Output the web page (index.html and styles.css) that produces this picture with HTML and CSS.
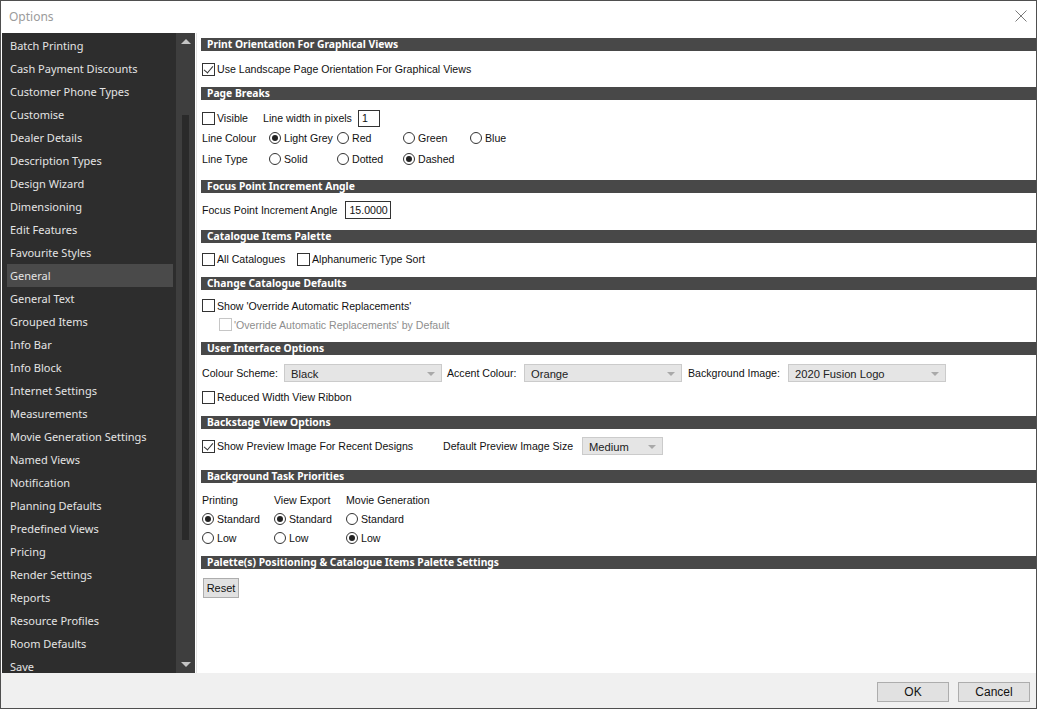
FILE: index.html
```html
<!DOCTYPE html>
<html lang="en">
<head>
    <meta charset="UTF-8">
    <title>Options</title>
    <link rel="stylesheet" href="styles.css">
</head>
<body>
    <div class="window">
        <div class="titlebar">
            <span class="title">Options</span>
            <svg class="close" width="12" height="12" viewBox="0 0 12 12">
                <path d="M0.5 0.5 L11.5 11.5 M11.5 0.5 L0.5 11.5" stroke="#7a7a7a" stroke-width="1" fill="none"/>
            </svg>
        </div>

        <div class="main">
            <div class="sidebar">
                <ul class="nav">
                    <li>Batch Printing</li>
                    <li>Cash Payment Discounts</li>
                    <li>Customer Phone Types</li>
                    <li>Customise</li>
                    <li>Dealer Details</li>
                    <li>Description Types</li>
                    <li>Design Wizard</li>
                    <li>Dimensioning</li>
                    <li>Edit Features</li>
                    <li>Favourite Styles</li>
                    <li class="active">General</li>
                    <li>General Text</li>
                    <li>Grouped Items</li>
                    <li>Info Bar</li>
                    <li>Info Block</li>
                    <li>Internet Settings</li>
                    <li>Measurements</li>
                    <li>Movie Generation Settings</li>
                    <li>Named Views</li>
                    <li>Notification</li>
                    <li>Planning Defaults</li>
                    <li>Predefined Views</li>
                    <li>Pricing</li>
                    <li>Render Settings</li>
                    <li>Reports</li>
                    <li>Resource Profiles</li>
                    <li>Room Defaults</li>
                    <li>Save</li>
                </ul>
                <div class="scrollbar">
                    <div class="arrow up"></div>
                    <div class="track"><div class="thumb"></div></div>
                    <div class="arrow down"></div>
                </div>
            </div>

            <div class="content">
                <div class="section s1">
                    <div class="header">Print Orientation For Graphical Views</div>
                    <div class="body">
                        <div class="row">
                            <label class="opt"><span class="check on"></span>Use Landscape Page Orientation For Graphical Views</label>
                        </div>
                    </div>
                </div>

                <div class="section s2">
                    <div class="header">Page Breaks</div>
                    <div class="body">
                        <div class="row">
                            <label class="opt w61"><span class="check"></span>Visible</label>
                            <span>Line width in pixels</span>
                            <span class="textbox small">1</span>
                        </div>
                        <div class="row">
                            <span class="w67">Line Colour</span>
                            <label class="opt w68"><span class="radio on"></span>Light Grey</label>
                            <label class="opt w66"><span class="radio"></span>Red</label>
                            <label class="opt w67"><span class="radio"></span>Green</label>
                            <label class="opt"><span class="radio"></span>Blue</label>
                        </div>
                        <div class="row">
                            <span class="w67">Line Type</span>
                            <label class="opt w68"><span class="radio"></span>Solid</label>
                            <label class="opt w66"><span class="radio"></span>Dotted</label>
                            <label class="opt"><span class="radio on"></span>Dashed</label>
                        </div>
                    </div>
                </div>

                <div class="section s3">
                    <div class="header">Focus Point Increment Angle</div>
                    <div class="body">
                        <div class="row">
                            <span>Focus Point Increment Angle</span>
                            <span class="textbox angle">15.0000</span>
                        </div>
                    </div>
                </div>

                <div class="section s4">
                    <div class="header">Catalogue Items Palette</div>
                    <div class="body">
                        <div class="row">
                            <label class="opt w95"><span class="check"></span>All Catalogues</label>
                            <label class="opt"><span class="check"></span>Alphanumeric Type Sort</label>
                        </div>
                    </div>
                </div>

                <div class="section s5">
                    <div class="header">Change Catalogue Defaults</div>
                    <div class="body">
                        <div class="row">
                            <label class="opt"><span class="check"></span>Show 'Override Automatic Replacements'</label>
                        </div>
                        <div class="row indent">
                            <label class="opt disabled"><span class="check"></span>'Override Automatic Replacements' by Default</label>
                        </div>
                    </div>
                </div>

                <div class="section s6">
                    <div class="header">User Interface Options</div>
                    <div class="body">
                        <div class="row">
                            <span class="lbl-scheme">Colour Scheme:</span>
                            <span class="combo wide">Black</span>
                            <span class="lbl-accent">Accent Colour:</span>
                            <span class="combo wide">Orange</span>
                            <span class="lbl-bg">Background Image:</span>
                            <span class="combo wide">2020 Fusion Logo</span>
                        </div>
                        <div class="row">
                            <label class="opt"><span class="check"></span>Reduced Width View Ribbon</label>
                        </div>
                    </div>
                </div>

                <div class="section s7">
                    <div class="header">Backstage View Options</div>
                    <div class="body">
                        <div class="row">
                            <label class="opt w241"><span class="check on"></span>Show Preview Image For Recent Designs</label>
                            <span class="lbl-size">Default Preview Image Size</span>
                            <span class="combo narrow">Medium</span>
                        </div>
                    </div>
                </div>

                <div class="section s8">
                    <div class="header">Background Task Priorities</div>
                    <div class="body">
                        <div class="row">
                            <span class="w72">Printing</span>
                            <span class="w72">View Export</span>
                            <span>Movie Generation</span>
                        </div>
                        <div class="row">
                            <label class="opt w72"><span class="radio on"></span>Standard</label>
                            <label class="opt w72"><span class="radio on"></span>Standard</label>
                            <label class="opt"><span class="radio"></span>Standard</label>
                        </div>
                        <div class="row">
                            <label class="opt w72"><span class="radio"></span>Low</label>
                            <label class="opt w72"><span class="radio"></span>Low</label>
                            <label class="opt"><span class="radio on"></span>Low</label>
                        </div>
                    </div>
                </div>

                <div class="section s9">
                    <div class="header">Palette(s) Positioning &amp; Catalogue Items Palette Settings</div>
                    <div class="body">
                        <button class="btn reset">Reset</button>
                    </div>
                </div>
            </div>
        </div>

        <div class="footer">
            <button class="btn dlg">OK</button>
            <button class="btn dlg">Cancel</button>
        </div>
    </div>
</body>
</html>
```

FILE: styles.css
```css
* {
    margin: 0;
    padding: 0;
    box-sizing: border-box;
}

body {
    font-family: "Liberation Sans", Arial, sans-serif;
    font-size: 10.6px;
    color: #111;
    background: #fff;
}

.window {
    width: 1037px;
    height: 709px;
    border: 1px solid #4f4f4f;
    display: flex;
    flex-direction: column;
    background: #fff;
    overflow: hidden;
}

/* title bar */
.titlebar {
    flex: none;
    height: 32px;
    display: flex;
    align-items: center;
    justify-content: space-between;
    padding: 0 9px 2px 8px;
}

.titlebar .title {
    font-family: "Noto Sans", sans-serif;
    font-size: 12px;
    color: #9b9b9b;
}

/* main area */
.main {
    flex: none;
    height: 640px;
    display: flex;
    padding-left: 1px;
}

.sidebar {
    flex: none;
    width: 193px;
    display: flex;
    background: #2d2d2d;
}

.nav {
    list-style: none;
    width: 174px;
    padding-top: 1px;
    overflow: hidden;
}

.nav li {
    height: 23px;
    line-height: 23px;
    margin: 0 3px 0 5px;
    padding-left: 3px;
    color: #e4e4e4;
    font-family: "Noto Sans", sans-serif;
    font-size: 11px;
    white-space: nowrap;
}

.nav li.active {
    background: #4a4a4a;
}

.scrollbar {
    width: 19px;
    background: #3e3e3e;
    display: flex;
    flex-direction: column;
    align-items: center;
}

.arrow {
    flex: none;
    height: 17px;
    width: 19px;
    display: flex;
    align-items: center;
    justify-content: center;
}

.arrow::after {
    content: "";
    border-left: 5px solid transparent;
    border-right: 5px solid transparent;
}

.arrow.up::after {
    border-bottom: 5px solid #c4c4c4;
}

.arrow.down::after {
    border-top: 5px solid #c4c4c4;
}

.track {
    flex: 1;
    width: 100%;
    display: flex;
    justify-content: center;
}

.thumb {
    width: 7px;
    height: 425px;
    margin-top: 65px;
    background: #2a2a2a;
}

/* settings panel */
.content {
    flex: 1;
    margin-left: 1px;
    border-left: 1px solid #e3e3e3;
    padding: 5px 0 0 4px;
}

.header {
    height: 13px;
    line-height: 13px;
    background: #484848;
    color: #fff;
    font-family: "Noto Sans", sans-serif;
    font-weight: 700;
    font-size: 10.3px;
    padding-left: 6px;
    white-space: nowrap;
}

.body {
    padding-left: 1px;
}

.row {
    display: flex;
    align-items: center;
    height: 20px;
    white-space: nowrap;
}

.opt {
    display: inline-flex;
    align-items: center;
}

.check {
    flex: none;
    width: 13px;
    height: 13px;
    border: 1px solid #333;
    background: #fff;
    margin-right: 2px;
    position: relative;
}

.check.on::after {
    content: "";
    position: absolute;
    left: 3px;
    top: 0px;
    width: 4px;
    height: 8px;
    border-right: 1.3px solid #333;
    border-bottom: 1.3px solid #333;
    transform: rotate(40deg);
}

.radio {
    flex: none;
    width: 12px;
    height: 12px;
    border: 1px solid #333;
    border-radius: 50%;
    background: #fff;
    margin-right: 3px;
    display: flex;
    align-items: center;
    justify-content: center;
}

.radio.on::after {
    content: "";
    width: 6px;
    height: 6px;
    border-radius: 50%;
    background: #222;
}

.disabled {
    color: #8e8e8e;
}

.disabled .check {
    border-color: #c6c6c6;
}

.indent {
    padding-left: 17px;
}

.textbox {
    display: inline-block;
    border: 1px solid #333;
    background: #fff;
    line-height: 15px;
    padding-left: 3px;
}

.textbox.small {
    width: 22px;
    height: 17px;
    margin-left: 6px;
}

.textbox.angle {
    width: 46px;
    height: 18px;
    line-height: 16px;
    margin-left: 8px;
}

.combo {
    position: relative;
    display: inline-block;
    height: 18px;
    line-height: 17px;
    background: #e5e5e5;
    border: 1px solid #cbcbcb;
    padding: 1px 0 0 6px;
    font-size: 11.2px;
    color: #222;
}

.combo::after {
    content: "";
    position: absolute;
    right: 6px;
    top: 7px;
    border-left: 4px solid transparent;
    border-right: 4px solid transparent;
    border-top: 4px solid #a9a9a9;
}

.combo.wide {
    width: 158px;
}

.combo.narrow {
    width: 81px;
}

.w61 { width: 61px; }
.w66 { width: 66px; }
.w67 { width: 67px; }
.w68 { width: 68px; }
.w72 { width: 72px; }
.w95 { width: 95px; }
.w241 { width: 241px; }

.lbl-scheme { width: 82px; }
.lbl-accent { width: 77px; margin-left: 5px; }
.lbl-bg { width: 100px; margin-left: 6px; }
.lbl-size { width: 139px; }

/* vertical rhythm of each group */
.s1 .body { padding-top: 8px; padding-bottom: 8px; }
.s2 .body { padding-top: 8px; padding-bottom: 12px; }
.s2 .row:last-child { margin-top: 1px; margin-bottom: -1px; }
.s3 .body { padding-top: 7px; padding-bottom: 10px; }
.s4 .body { padding-top: 6px; padding-bottom: 8px; }
.s5 .body { padding-top: 6px; padding-bottom: 8px; }
.s5 .row { height: 19px; }
.s6 .body { padding-top: 8px; padding-bottom: 9px; }
.s6 .row + .row { margin-top: 4px; }
.s7 .body { padding-top: 7px; padding-bottom: 14px; }
.s8 .body { padding-top: 7px; padding-bottom: 9px; }
.s8 .row { height: 19px; }
.s9 .body { padding-top: 9px; }

.btn {
    font-family: "Liberation Sans", Arial, sans-serif;
    font-size: 11px;
    color: #111;
    background: #e1e1e1;
    border: 1px solid #adadad;
}

.btn.reset {
    width: 36px;
    height: 20px;
    margin-left: 1px;
}

/* dialog buttons */
.footer {
    flex: 1;
    background: #f0f0f0;
    display: flex;
    justify-content: flex-end;
    align-items: flex-start;
    gap: 9px;
    padding: 9px 6px 0 0;
}

.btn.dlg {
    width: 72px;
    height: 20px;
    font-size: 12px;
}
```
